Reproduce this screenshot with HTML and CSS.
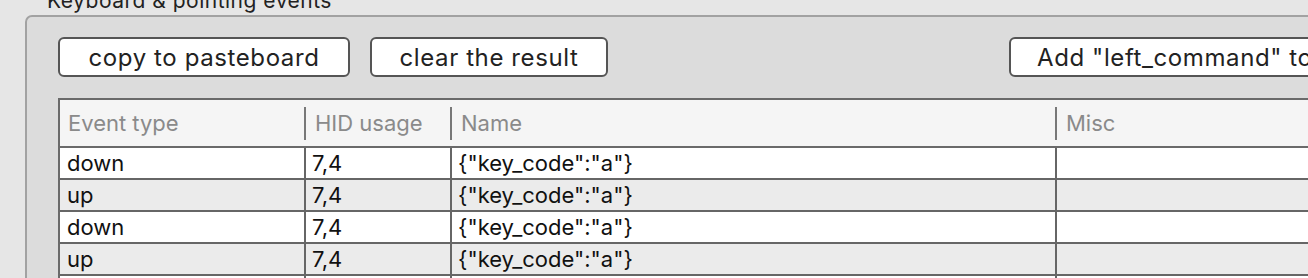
FILE: index.html
```html
<!DOCTYPE html>
<html>
<head>
<meta charset="utf-8">
<link rel="stylesheet" href="styles.css">
</head>
<body>
<div class="window">
  <div class="group-title">Keyboard &amp; pointing events</div>
  <div class="group">
    <div class="toolbar">
      <button class="btn btn-copy">copy to pasteboard</button>
      <button class="btn btn-clear">clear the result</button>
      <button class="btn btn-add">Add "left_command" to Simple Modifications</button>
    </div>
    <div class="table">
      <div class="row head">
        <div class="hcell"><div class="hlabel first">Event type</div></div>
        <div class="hcell"><div class="hlabel">HID usage</div></div>
        <div class="hcell"><div class="hlabel">Name</div></div>
        <div class="hcell"><div class="hlabel">Misc</div></div>
      </div>
      <div class="row body odd">
        <div class="cell">down</div><div class="cell">7,4</div><div class="cell">{"key_code":"a"}</div><div class="cell last"></div>
      </div>
      <div class="row body even">
        <div class="cell">up</div><div class="cell">7,4</div><div class="cell">{"key_code":"a"}</div><div class="cell last"></div>
      </div>
      <div class="row body odd">
        <div class="cell">down</div><div class="cell">7,4</div><div class="cell">{"key_code":"a"}</div><div class="cell last"></div>
      </div>
      <div class="row body even">
        <div class="cell">up</div><div class="cell">7,4</div><div class="cell">{"key_code":"a"}</div><div class="cell last"></div>
      </div>
      <div class="row body odd">
        <div class="cell">down</div><div class="cell">7,4</div><div class="cell">{"key_code":"a"}</div><div class="cell last"></div>
      </div>
    </div>
  </div>
</div>
</body>
</html>
```

FILE: styles.css
```css
html, body {
  margin: 0;
  padding: 0;
  background: #e6e6e6;
}

body {
  font-family: Inter, "Liberation Sans", sans-serif;
  color: #1f1f1f;
}

.window {
  display: flow-root;
  width: 1308px;
  height: 278px;
  overflow: hidden;
}

.group-title {
  margin-top: -13px;
  height: 27px;
  line-height: 28px;
  padding-left: 47px;
  font-size: 21px;
  letter-spacing: 0.5px;
  color: #222;
  white-space: nowrap;
}

.group {
  margin-top: 1px;
  margin-left: 25px;
  width: 1500px;
  height: 400px;
  box-sizing: border-box;
  border: 2px solid #a2a2a2;
  border-radius: 7px;
  background: #dcdcdc;
  padding: 20px 0 0 31px;
}

.toolbar {
  display: flex;
  align-items: flex-start;
}

.btn {
  box-sizing: border-box;
  height: 40px;
  border: 2px solid #555;
  border-radius: 6px;
  background: #fff;
  font-family: Inter, "Liberation Sans", sans-serif;
  font-size: 24px;
  letter-spacing: 0.6px;
  color: #222;
  padding: 0;
  white-space: nowrap;
  flex-shrink: 0;
}

.btn-copy { width: 292px; }
.btn-clear { width: 238px; margin-left: 20px; }
.btn-add { padding: 0 26px; margin-left: 401px; }

.table {
  margin-top: 21px;
  width: 1400px;
  border-top: 2px solid #6a6a6a;
  border-left: 2px solid #6a6a6a;
}

.row {
  display: grid;
}

.head {
  background: #f5f5f5;
  height: 48px;
  box-sizing: border-box;
  border-bottom: 2px solid #6a6a6a;
  grid-template-columns: 244px 146px 605px 1fr;
}

.hcell {
  display: flex;
  align-items: center;
}

.hlabel {
  height: 33px;
  display: flex;
  align-items: center;
  border-left: 2px solid #787878;
  padding-left: 9px;
  font-size: 22px;
  color: #8a8a8a;
  white-space: nowrap;
}

.hlabel.first {
  border-left: 0;
  padding-left: 8px;
}

.body {
  grid-template-columns: 246px 146px 605px 1fr;
}

.body.odd { background: #fff; }
.body.even { background: #ebebeb; }

.cell {
  box-sizing: border-box;
  height: 32px;
  display: flex;
  align-items: center;
  border-bottom: 2px solid #666;
  border-right: 2px solid #666;
  padding-left: 6px;
  font-size: 22px;
  color: #111;
  white-space: nowrap;
}

.body .cell:first-child {
  padding-left: 7px;
}

.cell.last {
  border-right: 0;
}
```
